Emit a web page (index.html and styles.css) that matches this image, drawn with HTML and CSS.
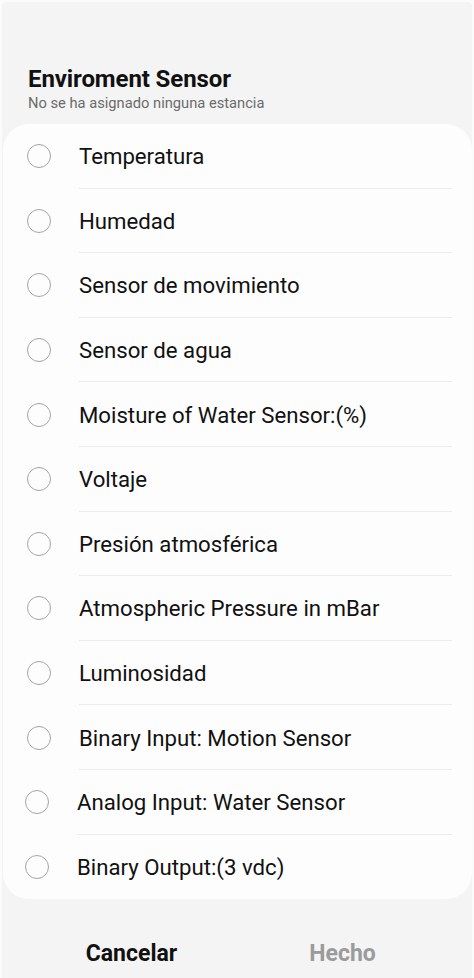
FILE: index.html
```html
<!DOCTYPE html>
<html lang="es">
<head>
    <meta charset="UTF-8">
    <meta name="viewport" content="width=device-width, initial-scale=1.0">
    <title>Enviroment Sensor</title>
    <link rel="stylesheet" href="styles.css">
</head>
<body>
    <div class="dialog">
        <div class="header">
            <h1>Enviroment Sensor</h1>
            <p>No se ha asignado ninguna estancia</p>
        </div>

        <div class="list">
            <div class="row"><span class="radio"></span><div class="label">Temperatura</div></div>
            <div class="row"><span class="radio"></span><div class="label">Humedad</div></div>
            <div class="row"><span class="radio"></span><div class="label">Sensor de movimiento</div></div>
            <div class="row"><span class="radio"></span><div class="label">Sensor de agua</div></div>
            <div class="row"><span class="radio"></span><div class="label">Moisture of Water Sensor:(%)</div></div>
            <div class="row"><span class="radio"></span><div class="label">Voltaje</div></div>
            <div class="row"><span class="radio"></span><div class="label">Presión atmosférica</div></div>
            <div class="row"><span class="radio"></span><div class="label">Atmospheric Pressure in mBar</div></div>
            <div class="row"><span class="radio"></span><div class="label">Luminosidad</div></div>
            <div class="row"><span class="radio"></span><div class="label">Binary Input: Motion Sensor</div></div>
            <div class="row shifted"><span class="radio"></span><div class="label">Analog Input: Water Sensor</div></div>
            <div class="row shifted last"><span class="radio"></span><div class="label">Binary Output:(3 vdc)</div></div>
        </div>

        <div class="buttons">
            <button class="btn">Cancelar</button>
            <button class="btn disabled">Hecho</button>
        </div>
    </div>
</body>
</html>
```

FILE: styles.css
```css
html, body {
    margin: 0;
    padding: 0;
}

body {
    background-color: #fbfbfb;
    color: #111;
    font-family: Roboto, "Noto Sans", Arial, sans-serif;
}

.dialog {
    box-sizing: border-box;
    height: 978px;
    margin: 2px 2px 0 2px;
    background-color: #f4f4f4;
    border-radius: 4px 4px 0 0;
}

.header {
    padding: 62px 26px 0 26px;
    height: 60px;
}
.header h1 {
    margin: 0;
    font-size: 24px;
    line-height: 30px;
    font-weight: 700;
    letter-spacing: -0.1px;
}
.header p {
    margin: 0;
    font-size: 14.7px;
    line-height: 18px;
    color: #6b6b6b;
}

.list {
    background-color: #fdfdfd;
    border-radius: 26px;
    margin: 0 0 0 1px;
}

.row {
    display: flex;
    align-items: stretch;
    height: 64.6px;
    padding-left: 24px;
}
.row.shifted {
    padding-left: 22px;
}

.radio {
    align-self: center;
    box-sizing: border-box;
    width: 24px;
    height: 24px;
    border: 1.5px solid #a4a4a4;
    border-radius: 50%;
    flex-shrink: 0;
}

.label {
    flex: 1;
    display: flex;
    align-items: center;
    margin-left: 28px;
    margin-right: 20px;
    padding-top: 1px;
    font-size: 22.2px;
    border-bottom: 1px solid #ececec;
}
.row.last .label {
    border-bottom: none;
}

.buttons {
    display: flex;
    padding: 40px 24px 0 24px;
}
.btn {
    flex: 1;
    background: none;
    border: none;
    font-family: Roboto, "Noto Sans", Arial, sans-serif;
    font-size: 23px;
    font-weight: 700;
    color: #111;
    padding: 0;
    line-height: 30px;
    cursor: pointer;
}
.btn.disabled {
    color: #9b9b9b;
}
```
